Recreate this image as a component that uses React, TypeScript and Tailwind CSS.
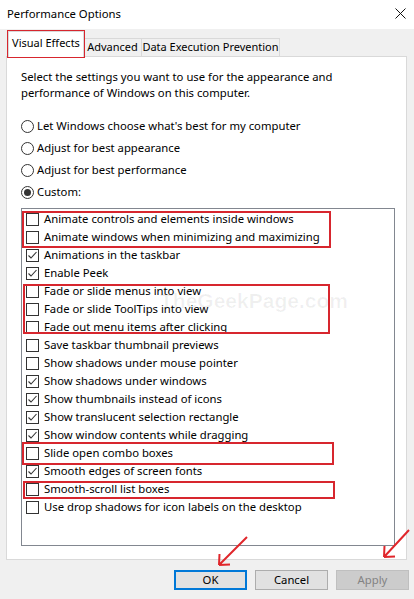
import React from 'react';

type Item = { label: string; checked: boolean };

const items: Item[] = [
  { label: 'Animate controls and elements inside windows', checked: false },
  { label: 'Animate windows when minimizing and maximizing', checked: false },
  { label: 'Animations in the taskbar', checked: true },
  { label: 'Enable Peek', checked: true },
  { label: 'Fade or slide menus into view', checked: false },
  { label: 'Fade or slide ToolTips into view', checked: false },
  { label: 'Fade out menu items after clicking', checked: false },
  { label: 'Save taskbar thumbnail previews', checked: false },
  { label: 'Show shadows under mouse pointer', checked: false },
  { label: 'Show shadows under windows', checked: true },
  { label: 'Show thumbnails instead of icons', checked: true },
  { label: 'Show translucent selection rectangle', checked: true },
  { label: 'Show window contents while dragging', checked: true },
  { label: 'Slide open combo boxes', checked: false },
  { label: 'Smooth edges of screen fonts', checked: true },
  { label: 'Smooth-scroll list boxes', checked: false },
  { label: 'Use drop shadows for icon labels on the desktop', checked: false },
];

const radios = [
  { label: "Let Windows choose what's best for my computer", on: false },
  { label: 'Adjust for best appearance', on: false },
  { label: 'Adjust for best performance', on: false },
  { label: 'Custom:', on: true },
];

function Checkbox({ checked }: { checked: boolean }) {
  return (
    <span className="w-[13px] h-[13px] border border-[#333333] bg-white flex items-center justify-center shrink-0">
      {checked && (
        <svg width="11" height="11" viewBox="0 0 11 11" fill="none">
          <path d="M1.5 5.5 L4 8 L9.5 2" stroke="#333333" strokeWidth="1.1" />
        </svg>
      )}
    </span>
  );
}

function Radio({ on }: { on: boolean }) {
  return (
    <span className="w-[13px] h-[13px] rounded-full border border-[#333333] bg-white flex items-center justify-center shrink-0">
      {on && <span className="w-[7px] h-[7px] rounded-full bg-[#333333]" />}
    </span>
  );
}

export default function App() {
  return (
    <div
      className="relative w-[414px] h-[599px] bg-[#f0f0f0] text-black overflow-hidden text-[11.3px]"
      style={{ fontFamily: '"Noto Sans", "Open Sans", sans-serif' }}
    >
      {/* title bar */}
      <div className="h-[29px] bg-white flex items-center justify-between pl-[7px] pr-[8px]">
        <span className="text-[11.3px]">Performance Options</span>
        <svg width="11" height="11" viewBox="0 0 11 11" className="mb-[2px]">
          <path d="M0.5 0.5 L10.5 10.5 M10.5 0.5 L0.5 10.5" stroke="#111" strokeWidth="1" />
        </svg>
      </div>

      {/* tabs */}
      <div className="h-[27px] flex items-end pl-[8px] whitespace-nowrap text-[11px]">
        <div className="relative z-10 -mb-px h-[26px] w-[76px] bg-white border border-b-0 border-[#d9d9d9] flex items-center justify-center pb-[3px]">
          Visual Effects
        </div>
        <div className="h-[18px] w-[58px] border border-b-0 border-l-0 border-[#d9d9d9] bg-[#f0f0f0] flex items-center justify-center">
          Advanced
        </div>
        <div className="h-[18px] w-[138px] border border-b-0 border-l-0 border-[#d9d9d9] bg-[#f0f0f0] flex items-center justify-center">
          Data Execution Prevention
        </div>
      </div>

      {/* panel */}
      <div className="mx-[6px] w-[401px] h-[504px] bg-white border border-[#d9d9d9] pt-[12px] pl-[14px]">
        <p className="leading-[16px] w-[320px]">
          Select the settings you want to use for the appearance and performance of Windows on this computer.
        </p>
        <div className="mt-[14px] flex flex-col">
          {radios.map((r) => (
            <div key={r.label} className="h-[22px] flex items-center gap-[3px]">
              <Radio on={r.on} />
              <span>{r.label}</span>
            </div>
          ))}
        </div>
        <div className="mt-[5px] w-[374px] h-[338px] border border-[#828790] pt-px pl-[4px]">
          {items.map((it) => (
            <div key={it.label} className="h-[18px] flex items-center gap-[5px]">
              <Checkbox checked={it.checked} />
              <span>{it.label}</span>
            </div>
          ))}
        </div>
      </div>

      {/* buttons */}
      <div className="mt-[10px] flex justify-end gap-[8px] pr-[5px]">
        <button className="w-[73px] h-[20px] bg-[#e1e1e1] border-2 border-[#0078d7] flex items-center justify-center">
          OK
        </button>
        <button className="w-[73px] h-[20px] bg-[#e1e1e1] border border-[#adadad] flex items-center justify-center">
          Cancel
        </button>
        <button className="w-[73px] h-[20px] bg-[#cccccc] border border-[#bfbfbf] text-[#838383] flex items-center justify-center">
          Apply
        </button>
      </div>

      {/* watermark */}
      <span
        className="absolute left-[160px] top-[285px] text-[21px] font-bold text-black/[0.06] pointer-events-none"
        style={{ fontFamily: '"Liberation Sans", Arial, sans-serif' }}
      >
        TheGeekPage.com
      </span>

      {/* annotations */}
      <div className="absolute left-[7px] top-[30px] w-[78px] h-[28px] border-2 border-[#d7262e] pointer-events-none" />
      <div className="absolute left-[22px] top-[211px] w-[309px] h-[37px] border-2 border-[#d7262e] pointer-events-none" />
      <div className="absolute left-[23px] top-[284px] w-[307px] h-[50px] border-2 border-[#d7262e] pointer-events-none" />
      <div className="absolute left-[22px] top-[442px] w-[312px] h-[23px] border-2 border-[#d7262e] pointer-events-none" />
      <div className="absolute left-[23px] top-[481px] w-[312px] h-[18px] border-2 border-[#d7262e] pointer-events-none" />
      <svg className="absolute left-0 top-0 pointer-events-none" width="414" height="599" viewBox="0 0 414 599" fill="none">
        <path d="M247 537 L219 565 M219 565 L219.5 554 M219 565 L230 564.5" stroke="#e0262b" strokeWidth="2" />
        <path d="M409 530 L384 557 M384 557 L384.5 546 M384 557 L395 556.5" stroke="#e0262b" strokeWidth="2" />
      </svg>
    </div>
  );
}
